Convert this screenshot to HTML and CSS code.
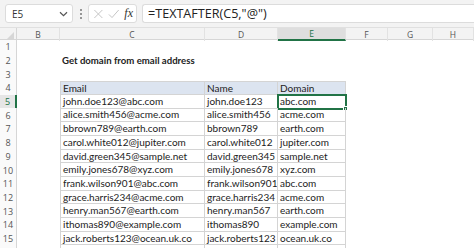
FILE: index.html
```html
<!DOCTYPE html>
<html>
<head>
<meta charset="utf-8">
<link rel="stylesheet" href="styles.css">
</head>
<body>
<div class="app">
  <div class="fbar">
    <div class="namebox"><span>E5</span>
      <svg class="chev" width="9" height="6" viewBox="0 0 9 6"><path d="M1 1.2 L4.5 4.6 L8 1.2" fill="none" stroke="#555" stroke-width="1.2"/></svg>
    </div>
    <div class="dots"><i></i><i></i><i></i></div>
    <div class="fxbox">
      <svg width="12" height="12" viewBox="0 0 12 12"><path d="M1.5 1.5 L10.5 10.5 M10.5 1.5 L1.5 10.5" stroke="#c4c4c4" stroke-width="1.1"/></svg>
      <svg width="13" height="12" viewBox="0 0 13 12"><path d="M1 6.5 L4.5 10 L12 1.5" fill="none" stroke="#c4c4c4" stroke-width="1.1"/></svg>
      <span class="fx">fx</span>
    </div>
    <div class="finput">=TEXTAFTER(C5,"@")</div>
  </div>
  <div class="sheet">
    <div class="row hdr">
      <div class="corner"><svg width="8" height="8" viewBox="0 0 8 8"><path d="M8 0 L8 8 L0 8 Z" fill="#d6d6d6"/></svg></div>
      <div class="ch">B</div><div class="ch">C</div><div class="ch">D</div><div class="ch sel">E</div><div class="ch">F</div><div class="ch">G</div><div class="ch">H</div>
    </div>
    <div class="row"><div class="rh">1</div></div>
    <div class="row"><div class="rh">2</div><div></div><div class="title">Get domain from email address</div></div>
    <div class="row"><div class="rh">3</div></div>
    <div class="row"><div class="rh">4</div><div></div><div class="t th first">Email</div><div class="t th">Name</div><div class="t th">Domain</div></div>
    <div class="row"><div class="rh sel">5</div><div></div><div class="t first">john.doe123@abc.com</div><div class="t">john.doe123</div><div class="t active">abc.com<span class="handle"></span></div></div>
    <div class="row"><div class="rh">6</div><div></div><div class="t first">alice.smith456@acme.com</div><div class="t">alice.smith456</div><div class="t">acme.com</div></div>
    <div class="row"><div class="rh">7</div><div></div><div class="t first">bbrown789@earth.com</div><div class="t">bbrown789</div><div class="t">earth.com</div></div>
    <div class="row"><div class="rh">8</div><div></div><div class="t first">carol.white012@jupiter.com</div><div class="t">carol.white012</div><div class="t">jupiter.com</div></div>
    <div class="row"><div class="rh">9</div><div></div><div class="t first">david.green345@sample.net</div><div class="t">david.green345</div><div class="t">sample.net</div></div>
    <div class="row"><div class="rh">10</div><div></div><div class="t first">emily.jones678@xyz.com</div><div class="t">emily.jones678</div><div class="t">xyz.com</div></div>
    <div class="row"><div class="rh">11</div><div></div><div class="t first">frank.wilson901@abc.com</div><div class="t">frank.wilson901</div><div class="t">abc.com</div></div>
    <div class="row"><div class="rh">12</div><div></div><div class="t first">grace.harris234@acme.com</div><div class="t">grace.harris234</div><div class="t">acme.com</div></div>
    <div class="row"><div class="rh">13</div><div></div><div class="t first">henry.man567@earth.com</div><div class="t">henry.man567</div><div class="t">earth.com</div></div>
    <div class="row"><div class="rh">14</div><div></div><div class="t first">ithomas890@example.com</div><div class="t">ithomas890</div><div class="t">example.com</div></div>
    <div class="row"><div class="rh">15</div><div></div><div class="t first">jack.roberts123@ocean.uk.co</div><div class="t">jack.roberts123</div><div class="t">ocean.uk.co</div></div>
    <div class="row"><div class="rh">16</div><div></div><div class="t first">karen.white456@mars.com</div><div class="t">karen.white456</div><div class="t">mars.com</div></div>
  </div>
</div>
</body>
</html>
```
FILE: styles.css
```css
* { box-sizing: border-box; }
html, body { margin: 0; padding: 0; background: #fff; }
body { width: 474px; height: 248px; overflow: hidden; font-family: "Lato", "Open Sans", sans-serif; }
.app { width: 474px; height: 248px; overflow: hidden; }

.fbar {
  height: 28px;
  background: #f3f3f3;
  display: flex;
  align-items: center;
  padding: 0 0 0 5px;
  border-bottom: 1px solid #e0e0e0;
}
.namebox {
  width: 68px; height: 19px;
  background: #fff;
  border: 1px solid #dcdcdc;
  border-radius: 3px;
  display: flex; align-items: center; justify-content: space-between;
  padding: 0 4px 0 6px;
  font-family: "Open Sans", sans-serif;
  font-size: 10px; color: #333;
}
.chev { margin-top: 1px; }
.dots { width: 15px; display: flex; flex-direction: column; align-items: center; gap: 2px; }
.dots i { display: block; width: 2px; height: 2px; background: #777; border-radius: 1px; }
.fxbox {
  width: 49px; height: 19px;
  background: #fff;
  border: 1px solid #dcdcdc;
  border-radius: 3px;
  display: flex; align-items: center; gap: 4px;
  padding: 0 3px 0 4px;
}
.fx { font-family: "Liberation Serif", serif; font-style: italic; font-size: 12px; color: #333; margin-left: 1px; }
.finput {
  flex: 1; height: 19px;
  margin-left: 5px;
  background: #fff;
  border: 1px solid #dcdcdc;
  border-right: none;
  border-radius: 3px 0 0 3px;
  font-family: "Open Sans", sans-serif;
  font-size: 12.6px; color: #222;
  padding-left: 5px;
  line-height: 17px;
}

.sheet { display: flex; flex-direction: column; }
.row {
  display: grid;
  grid-template-columns: 17px 43px 145px 73px 68px 42px 45px 1fr;
  height: 13.7px;
  font-size: 10px;
  color: #222;
}
.row.hdr {
  height: 12px;
  background: #f3f3f3;
  border-bottom: 1px solid #d6d6d6;
  font-family: "Open Sans", sans-serif;
  font-size: 8.5px;
  color: #555;
}
.corner { display: flex; align-items: flex-end; justify-content: flex-end; padding: 0 2px 1px 0; border-right: 1px solid #d6d6d6; }
.ch { display: flex; align-items: center; justify-content: center; border-right: 1px solid #e2e2e2; }
.ch.sel { background: #dedede; border-bottom: 2px solid #217346; color: #217346; }
.rh {
  font-family: "Open Sans", sans-serif;
  font-size: 9px;
  color: #555;
  display: flex; align-items: center; justify-content: center;
  border-right: 1px solid #d6d6d6;
  background: #fafafa;
}
.rh.sel { border-right: 2px solid #217346; color: #217346; background: #e6e6e6; }
.title { grid-column: 3 / 6; font-weight: bold; font-size: 9.6px; padding-left: 2px; line-height: 13.7px; white-space: nowrap; }
.t {
  border-right: 1px solid #d4d4d4;
  border-bottom: 1px solid #d4d4d4;
  padding-left: 2px;
  line-height: 13px;
  white-space: nowrap;
  overflow: hidden;
  position: relative;
}
.t.first { border-left: 1px solid #d4d4d4; }
.t.th { background: #dce4f0; border-top: 1px solid #d4d4d4; line-height: 12px; }
.t.active { outline: 2px solid #217346; outline-offset: -1px; overflow: visible; }
.handle { position: absolute; right: -3px; bottom: -3px; width: 5px; height: 5px; background: #217346; border: 1px solid #fff; }
```
